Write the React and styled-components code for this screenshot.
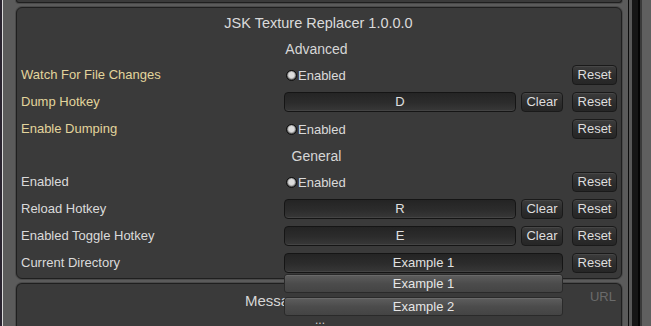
import React from 'react';
import styled, { createGlobalStyle } from 'styled-components';

const Global = createGlobalStyle`
  html, body {
    margin: 0;
    padding: 0;
    background: #5b5b5b;
    overflow: hidden;
  }
  body {
    font-family: "Liberation Sans", Arial, sans-serif;
    color: #d9d9d9;
  }
`;

const Page = styled.div`
  display: flex;
  width: 651px;
  height: 326px;
  overflow: hidden;
  border-left: 2px solid #2a2430;
  box-sizing: border-box;
`;

const EdgeLine = styled.div`
  width: 1px;
  background: #d8d8d8;
`;

const Column = styled.div`
  flex: 1;
  display: flex;
  flex-direction: column;
  gap: 4px;
  padding: 0 5px 0 13px;
  min-width: 0;
`;

const Scrollbar = styled.div`
  width: 24px;
  background: linear-gradient(
    to right,
    #5b5b5b 0 1px,
    #0c0c0c 1px 2px,
    #585858 2px 5px,
    #161616 5px 11px,
    #050505 11px 13px,
    #3a3a3a 13px 15px,
    #5f5f5f 15px
  );
`;

const Panel = styled.div`
  position: relative;
  background: #3a3a3a;
  border: 1px solid #1f1f1f;
  border-radius: 6px;
  box-sizing: border-box;
  box-shadow: 0 0 0 1px #4a4a4a;
`;

const TopStub = styled(Panel)`
  height: 3px;
  border-top: none;
  border-radius: 0 0 5px 5px;
`;

const MainPanel = styled(Panel)`
  display: flex;
  flex-direction: column;
  gap: 7px;
  padding: 5px 4px 5px 3px;
`;

const MessagePanel = styled(Panel)`
  flex: 1;
  border-bottom: none;
  border-radius: 6px 6px 0 0;
  padding: 5px 4px 0 228px;
`;

const Title = styled.div`
  height: 20px;
  line-height: 20px;
  text-align: center;
  font-size: 14.5px;
  color: #dadada;
  margin-bottom: -1px;
`;

const SectionHeader = styled.div`
  height: 20px;
  line-height: 20px;
  font-size: 14px;
  color: #d6d6d6;
  text-align: center;
  padding-right: 4px;
  margin-bottom: -1px;
`;

const Row = styled.div`
  display: grid;
  grid-template-columns: 264px 1fr 54px;
  height: 20px;
  align-items: center;
  position: relative;
`;

const Label = styled.div`
  font-size: 13px;
  color: ${(p) => (p.$advanced ? '#e3d59c' : '#dadada')};
  margin-left: 1px;
  margin-top: -1px;
`;

const ValueArea = styled.div`
  display: flex;
  gap: 5px;
  height: 20px;
  position: relative;
`;

const Field = styled.div`
  flex: 1;
  height: 20px;
  box-sizing: border-box;
  border: 1px solid #151515;
  border-radius: 4px;
  background: linear-gradient(#242424, #2c2c2c 55%, #383838);
  box-shadow: inset 0 -1px 0 #444;
  font-size: 13px;
  line-height: 18px;
  text-align: center;
  color: #e0e0e0;
`;

const Button = styled.div`
  width: ${(p) => p.$w || 45}px;
  height: 20px;
  justify-self: end;
  box-sizing: border-box;
  border: 1px solid #1a1a1a;
  border-radius: 4px;
  background: linear-gradient(#3c3c3c, #2c2c2c 60%, #262626);
  box-shadow: inset 0 1px 0 #474747;
  font-size: 13px;
  line-height: 18px;
  text-align: center;
  color: #dedede;
`;

const Toggle = styled.div`
  display: flex;
  align-items: center;
  height: 20px;
  font-size: 13px;
  color: #dadada;
  padding-left: 2px;
`;

const Radio = styled.span`
  width: 11px;
  height: 11px;
  box-sizing: border-box;
  border-radius: 50%;
  border: 1px solid #101010;
  background: radial-gradient(circle at 50% 45%, #dcdcdc 0 2.5px, #b0b0b0 3.5px, #5a5a5a 4.5px);
  margin-right: 1px;
`;

const Menu = styled.div`
  position: absolute;
  left: 0;
  top: 21px;
  width: 279px;
  display: flex;
  flex-direction: column;
  gap: 4px;
  z-index: 2;
`;

const Option = styled.div`
  height: 19px;
  box-sizing: border-box;
  border: 1px solid #2a2a2a;
  border-radius: 3px;
  background: linear-gradient(#5e5e5e, #4c4c4c 50%, #444444);
  box-shadow: inset 0 1px 0 #6a6a6a;
  font-size: 13px;
  line-height: 17px;
  text-align: center;
  color: #e6e6e6;
`;

const More = styled.div`
  height: 8px;
  font-size: 12px;
  line-height: 6px;
  color: #d0d0d0;
  margin-top: -3px;
  padding-left: 31px;
`;

const MessageHeader = styled.div`
  display: flex;
  justify-content: space-between;
  align-items: flex-start;
`;

const MessageTitle = styled.span`
  font-size: 15px;
  color: #d6d6d6;
  margin-top: 3px;
`;

const Url = styled.span`
  font-size: 13px;
  color: #6b6b6b;
  margin-right: 1px;
`;

function SettingRow({ label, advanced, children }) {
  return (
    <Row>
      <Label $advanced={advanced}>{label}</Label>
      <ValueArea>{children}</ValueArea>
      <Button>Reset</Button>
    </Row>
  );
}

function Hotkey({ value }) {
  return (
    <>
      <Field>{value}</Field>
      <Button $w={42}>Clear</Button>
    </>
  );
}

function Enabled() {
  return (
    <Toggle>
      <Radio />
      Enabled
    </Toggle>
  );
}

export default function App() {
  return (
    <>
      <Global />
      <Page>
        <EdgeLine />
        <Column>
          <TopStub />
          <MainPanel>
            <Title>JSK Texture Replacer 1.0.0.0</Title>
            <SectionHeader>Advanced</SectionHeader>
            <SettingRow label="Watch For File Changes" advanced>
              <Enabled />
            </SettingRow>
            <SettingRow label="Dump Hotkey" advanced>
              <Hotkey value="D" />
            </SettingRow>
            <SettingRow label="Enable Dumping" advanced>
              <Enabled />
            </SettingRow>
            <SectionHeader>General</SectionHeader>
            <SettingRow label="Enabled">
              <Enabled />
            </SettingRow>
            <SettingRow label="Reload Hotkey">
              <Hotkey value="R" />
            </SettingRow>
            <SettingRow label="Enabled Toggle Hotkey">
              <Hotkey value="E" />
            </SettingRow>
            <SettingRow label="Current Directory">
              <Field>Example 1</Field>
              <Menu>
                <Option>Example 1</Option>
                <Option>Example 2</Option>
                <More>...</More>
              </Menu>
            </SettingRow>
          </MainPanel>
          <MessagePanel>
            <MessageHeader>
              <MessageTitle>Message</MessageTitle>
              <Url>URL</Url>
            </MessageHeader>
          </MessagePanel>
        </Column>
        <Scrollbar />
      </Page>
    </>
  );
}
